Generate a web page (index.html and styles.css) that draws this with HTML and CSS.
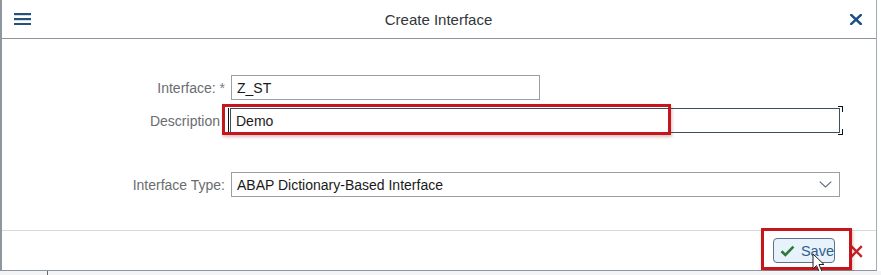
FILE: index.html
```html
<!DOCTYPE html>
<html>
<head>
<meta charset="utf-8">
<link rel="stylesheet" href="styles.css">
</head>
<body>
<div class="dialog">
  <header class="head">
    <svg class="menu" width="17" height="12" viewBox="0 0 17 12"><rect x="0" y="0" width="17" height="2.2" fill="#27507d"/><rect x="0" y="5" width="17" height="2.2" fill="#27507d"/><rect x="0" y="10" width="17" height="2.2" fill="#27507d"/></svg>
    <div class="title">Create Interface</div>
    <svg class="close" width="12" height="11" viewBox="0 0 12 11"><path d="M1.2 1 L10.8 10 M10.8 1 L1.2 10" stroke="#1d4f86" stroke-width="2.4" stroke-linecap="square"/></svg>
  </header>
  <main class="content">
    <div class="form">
      <label class="lbl">Interface: <span class="req">*</span></label>
      <div class="field"><div class="input short">Z_ST</div></div>
      <label class="lbl desc-lbl">Description</label>
      <div class="field"><div class="input focus">Demo<span class="br bl"></span><span class="br rt"></span><span class="br rb"></span></div></div>
      <div class="spacer"></div><div class="spacer"></div>
      <label class="lbl">Interface Type:</label>
      <div class="field"><div class="input select">ABAP Dictionary-Based Interface
        <svg class="chev" width="13" height="7" viewBox="0 0 13 7"><path d="M0.7 0.7 L6.5 6 L12.3 0.7" fill="none" stroke="#5f6b77" stroke-width="1.1"/></svg></div></div>
    </div>
    <div class="mark mark-desc"></div>
  </main>
  <footer class="foot">
    <button class="save"><svg width="15" height="12" viewBox="0 0 15 12"><path d="M1.5 6.3 L5.4 10 L13.5 1.6" fill="none" stroke="#2b7a3b" stroke-width="2.6"/></svg><span>Save</span></button>
    <svg class="cancel" width="13" height="13" viewBox="0 0 13 13"><path d="M1.2 1.2 L11.8 11.8 M11.8 1.2 L1.2 11.8" stroke="#c3242b" stroke-width="2.4"/></svg>
    <div class="mark mark-save"></div>
    <svg class="cursor" width="14" height="22" viewBox="0 0 14 22"><path d="M1 1 L1 16 L4.5 12.5 L7.5 19.5 L10 18.5 L7 11.5 L12 11.5 Z" fill="#fff" stroke="#222" stroke-width="1"/></svg>
  </footer>
</div>
<div class="below"><div class="tick"></div></div>
</body>
</html>
```
FILE: styles.css
```css
html, body { margin: 0; padding: 0; background: #fff; }
body { width: 881px; height: 275px; overflow: hidden; font-family: "Liberation Sans", Arial, sans-serif; }
.dialog {
  width: 877px; height: 271px; box-sizing: border-box;
  border-left: 2px solid #8e979f; border-right: 1px solid #a4acb3; border-bottom: 1px solid #8e979f;
  display: flex; flex-direction: column; background: #fff;
}
.head {
  height: 39px; box-sizing: border-box; border-bottom: 1px solid #8c959d;
  display: flex; align-items: center; padding: 0 14px 0 12px; position: relative;
}
.title { flex: 1; text-align: center; font-size: 15px; color: #32363a; margin-right: 4px; }
.close { margin-top: 1px; }
.content { height: 192px; box-sizing: border-box; border-bottom: 1px solid #d9d9d9; position: relative; padding-top: 36px; }
.form { display: grid; grid-template-columns: 227px 610px; column-gap: 2px; row-gap: 8px; align-items: center; }
.lbl { text-align: right; font-size: 14px; color: #6a6d70; padding-right: 4px; }
.desc-lbl { padding-right: 9px; }
.req { color: #7a7d80; }
.spacer { height: 23px; }
.input {
  height: 25px; box-sizing: border-box; border: 1px solid #9aa0a5; background: #fff;
  font-size: 14px; color: #1a1a1a; padding: 0 5px; display: flex; align-items: center; position: relative;
}
.short { width: 309px; }
.focus { width: 610px; border-color: #3c4f60; margin-left: -1px; }
.select { width: 609px; justify-content: space-between; padding-right: 7px; }
.br { position: absolute; box-sizing: border-box; }
.bl { left: -3px; top: -1px; bottom: -1px; border-left: 1.5px solid #111; }
.rt { right: -4px; top: -3px; width: 5px; height: 6px; border-top: 1.5px solid #111; border-right: 1.5px solid #111; }
.rb { right: -4px; bottom: -3px; width: 5px; height: 6px; border-bottom: 1.5px solid #111; border-right: 1.5px solid #111; }
.mark { position: absolute; border: 3px solid #c5161d; box-shadow: 1px 2px 3px rgba(120,0,0,0.25); box-sizing: border-box; }
.mark-desc { left: 220px; top: 65px; width: 449px; height: 31px; }
.foot { flex: 1; display: flex; align-items: center; justify-content: flex-end; padding-right: 13px; position: relative; }
.save {
  width: 62px; height: 25px; box-sizing: border-box; border: 1px solid #5b7289; border-radius: 4px; background: #e8f2fb;
  display: flex; align-items: center; gap: 6px; padding: 0 0 0 6px; font-family: inherit; font-size: 14.5px; color: #2f5f8c; margin-right: 15px;
}
.cancel { margin-top: 1px; }
.mark-save { left: 759px; top: -3px; width: 91px; height: 42px; }
.cursor { position: absolute; left: 810px; top: 22px; }
.below { height: 4px; background: #f3f4f5; position: relative; }
.tick { position: absolute; left: 47px; top: 0; width: 1px; height: 4px; background: #666; }
```
